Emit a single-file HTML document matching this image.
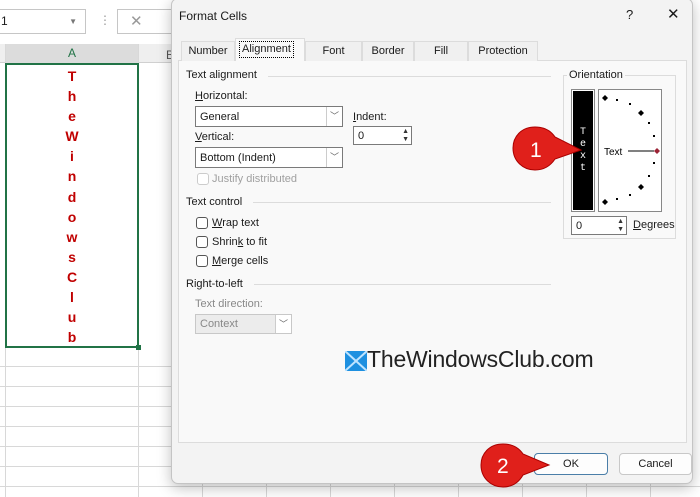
<!DOCTYPE html>
<html><head><style>
*{margin:0;padding:0;box-sizing:border-box}
body{width:700px;height:497px;overflow:hidden;background:#fff;font-family:"Liberation Sans",sans-serif;font-size:11px;color:#1a1a1a;position:relative}
.a{position:absolute}
.hl{position:absolute;height:1px;background:#d8d8d8}
.vl{position:absolute;width:1px;background:#d8d8d8}
.sel{border:1px solid #7a7a7a;background:#fff}
.line{position:absolute;height:1px;background:#dcdcdc}
.cb{position:absolute;width:12px;height:12px;border:1px solid #555;border-radius:3px;background:#fff}
u{text-decoration:underline}
.btn{position:absolute;border:1px solid #c8c8c8;border-radius:4px;background:#fdfdfd;text-align:center;font-size:11px;line-height:20px}
</style></head><body>
<div class="a" style="left:0;top:0;width:700px;height:44px;background:#fff"></div>
<div class="a" style="left:-4px;top:9px;width:90px;height:25px;border:1px solid #c6c6c6;font-size:12px;line-height:23px;padding-left:4px">1<span style="position:absolute;right:8px;top:0;color:#777;font-size:8px">▼</span></div>
<div class="a" style="left:99px;top:13px;color:#999;font-size:12px">⋮</div>
<div class="a" style="left:117px;top:9px;width:60px;height:25px;border:1px solid #c6c6c6;color:#999;font-size:15px;line-height:23px;padding-left:12px">✕</div>
<div class="a" style="left:0;top:44px;width:171px;height:19px;background:#efefef;border-bottom:1px solid #d0d0d0"></div>
<div class="a" style="left:6px;top:44px;width:132px;height:19px;background:#dcdcdc;text-align:center;color:#217346;font-size:12px;line-height:19px">A</div>
<div class="a" style="left:166px;top:48px;color:#555;font-size:12px">B</div>
<div class="vl" style="left:5px;top:44px;height:453px"></div>
<div class="vl" style="left:138px;top:44px;height:453px"></div>
<div class="hl" style="left:0;top:366px;width:171px"></div>
<div class="hl" style="left:0;top:386px;width:171px"></div>
<div class="hl" style="left:0;top:406px;width:171px"></div>
<div class="hl" style="left:0;top:426px;width:171px"></div>
<div class="hl" style="left:0;top:446px;width:171px"></div>
<div class="hl" style="left:0;top:466px;width:171px"></div>
<div class="hl" style="left:0;top:486px;width:700px"></div>
<div class="vl" style="left:202px;top:483px;height:14px"></div>
<div class="vl" style="left:266px;top:483px;height:14px"></div>
<div class="vl" style="left:330px;top:483px;height:14px"></div>
<div class="vl" style="left:394px;top:483px;height:14px"></div>
<div class="vl" style="left:458px;top:483px;height:14px"></div>
<div class="vl" style="left:522px;top:483px;height:14px"></div>
<div class="vl" style="left:586px;top:483px;height:14px"></div>
<div class="vl" style="left:650px;top:483px;height:14px"></div>
<div class="a" style="left:5px;top:63px;width:134px;height:285px;border:2px solid #217346;background:#fff"></div>
<div class="a" style="left:136px;top:345px;width:5px;height:5px;background:#217346"></div>
<div class="a" style="left:6px;top:66px;width:132px;text-align:center;color:#c00000;font-weight:bold;font-size:14px;line-height:20.1px">T<br>h<br>e<br>W<br>i<br>n<br>d<br>o<br>w<br>s<br>C<br>l<br>u<br>b</div>
<div class="a" style="left:171px;top:-2px;width:522px;height:486px;background:#f3f3f3;border:1px solid #c4c4c4;border-radius:7px;box-shadow:0 4px 14px rgba(0,0,0,.25)"></div>
<div class="a" style="left:179px;top:9px;font-size:12px">Format Cells</div>
<div class="a" style="left:626px;top:7px;font-size:13px">?</div>
<div class="a" style="left:667px;top:5px;font-size:15px">✕</div>
<div class="a" style="left:178px;top:60px;width:509px;height:383px;background:#f9f9f9;border:1px solid #dcdcdc"></div>
<div class="a" style="left:181px;top:41px;width:54px;height:20px;border:1px solid #dcdcdc;border-bottom:none;background:#f0f0f0;text-align:center;line-height:19px">Number</div>
<div class="a" style="left:235px;top:38px;width:70px;height:23px;border:1px solid #dcdcdc;border-bottom:none;background:#f9f9f9"></div>
<div class="a" style="left:239px;top:41px;height:17px;border:1px dotted #000;padding:0 2px;line-height:15px">Alignment</div>
<div class="a" style="left:305px;top:41px;width:57px;height:20px;border:1px solid #dcdcdc;border-bottom:none;background:#f0f0f0;text-align:center;line-height:19px">Font</div>
<div class="a" style="left:362px;top:41px;width:52px;height:20px;border:1px solid #dcdcdc;border-bottom:none;background:#f0f0f0;text-align:center;line-height:19px">Border</div>
<div class="a" style="left:414px;top:41px;width:54px;height:20px;border:1px solid #dcdcdc;border-bottom:none;background:#f0f0f0;text-align:center;line-height:19px">Fill</div>
<div class="a" style="left:468px;top:41px;width:70px;height:20px;border:1px solid #dcdcdc;border-bottom:none;background:#f0f0f0;text-align:center;line-height:19px">Protection</div>
<div class="a" style="left:186px;top:69px">Text alignment</div>
<div class="line" style="left:268px;top:76px;width:283px"></div>
<div class="a" style="left:195px;top:90px"><u>H</u>orizontal:</div>
<div class="a sel" style="left:195px;top:106px;width:148px;height:21px;padding:4px 0 0 4px">General<span style="position:absolute;right:0;top:0;width:16px;height:19px;border-left:1px solid #ccc;text-align:center;color:#666;font-size:9px;line-height:19px">﹀</span></div>
<div class="a" style="left:195px;top:131px"><u>V</u>ertical:</div>
<div class="a sel" style="left:195px;top:147px;width:148px;height:21px;padding:4px 0 0 4px">Bottom (Indent)<span style="position:absolute;right:0;top:0;width:16px;height:19px;border-left:1px solid #ccc;text-align:center;color:#666;font-size:9px;line-height:19px">﹀</span></div>
<div class="a" style="left:353px;top:111px"><u>I</u>ndent:</div>
<div class="a sel" style="left:353px;top:126px;width:59px;height:19px;padding:3px 0 0 4px">0<span style="position:absolute;right:2px;top:1px;font-size:7px;color:#333;line-height:8px">▲<br>▼</span></div>
<div class="cb" style="left:197px;top:173px;border-color:#ccc"></div>
<div class="a" style="left:212px;top:173px;color:#a0a0a0">Justify distributed</div>
<div class="a" style="left:186px;top:196px">Text control</div>
<div class="line" style="left:253px;top:202px;width:298px"></div>
<div class="cb" style="left:196px;top:217px"></div><div class="a" style="left:212px;top:217px"><u>W</u>rap text</div>
<div class="cb" style="left:196px;top:236px"></div><div class="a" style="left:212px;top:236px">Shrin<u>k</u> to fit</div>
<div class="cb" style="left:196px;top:255px"></div><div class="a" style="left:212px;top:255px"><u>M</u>erge cells</div>
<div class="a" style="left:186px;top:278px">Right-to-left</div>
<div class="line" style="left:254px;top:284px;width:297px"></div>
<div class="a" style="left:195px;top:298px;color:#888">Text direction:</div>
<div class="a" style="left:195px;top:314px;width:97px;height:20px;border:1px solid #c8c8c8;background:#ececec;color:#888;padding:3px 0 0 4px">Context<span style="position:absolute;right:0;top:0;width:16px;height:18px;border-left:1px solid #ccc;background:#fff;text-align:center;color:#666;font-size:9px;line-height:18px">﹀</span></div>
<div class="a" style="left:563px;top:75px;width:113px;height:164px;border:1px solid #dcdcdc"></div>
<div class="a" style="left:567px;top:69px;background:#f9f9f9;padding:0 2px">Orientation</div>
<div class="a" style="left:571px;top:89px;width:24px;height:123px;background:#000;border:1px solid #888;box-shadow:0 0 0 1px #fff inset"></div>
<div class="a" style="left:571px;top:127px;width:24px;text-align:center;color:#fff;font-size:10px;line-height:12px;font-family:'Liberation Mono',monospace">T<br>e<br>x<br>t</div>
<div class="a" style="left:598px;top:89px;width:64px;height:123px;background:#fff;border:1px solid #888"></div>
<svg class="a" style="left:598px;top:89px" width="64" height="123">
<g fill="#000">
<path d="M7 6l3 3-3 3-3-3z"/><path d="M43 21l3 3-3 3-3-3z"/><path d="M43 95l3 3-3 3-3-3z"/><path d="M7 110l3 3-3 3-3-3z"/>
<rect x="18" y="10" width="2" height="2"/><rect x="31" y="14" width="2" height="2"/><rect x="50" y="33" width="2" height="2"/><rect x="55" y="46" width="2" height="2"/><rect x="55" y="73" width="2" height="2"/><rect x="50" y="86" width="2" height="2"/><rect x="31" y="105" width="2" height="2"/><rect x="18" y="109" width="2" height="2"/></g>
<line x1="30" y1="62" x2="56" y2="62" stroke="#000"/><path d="M59 59l3 3-3 3-3-3z" fill="#9b2335"/>
<text x="6" y="66" font-size="10" font-family="Liberation Sans">Text</text></svg>
<div class="a sel" style="left:571px;top:216px;width:56px;height:19px;padding:3px 0 0 4px">0<span style="position:absolute;right:2px;top:1px;font-size:7px;color:#333;line-height:8px">▲<br>▼</span></div>
<div class="a" style="left:633px;top:219px"><u>D</u>egrees</div>
<svg class="a" style="left:345px;top:351px" width="22" height="20"><rect width="22" height="20" fill="#1e90e0"/><path d="M0 0L22 20M22 0L0 20" stroke="#bfe4ff" stroke-width="2"/></svg>
<div class="a" style="left:367px;top:346px;font-size:23px;color:#222;letter-spacing:-0.2px">TheWindowsClub.com</div>
<div class="btn" style="left:534px;top:453px;width:74px;border-color:#4a7ea8">OK</div>
<div class="btn" style="left:619px;top:453px;width:73px">Cancel</div>
<svg class="a" style="left:511px;top:125px" width="75" height="48"><path d="M24 2 C10 2 2 12 2 23 C2 36 12 45 24 45 C34 45 40 40 44 34 L70 25 L44 12 C40 6 34 2 24 2Z" fill="#e0201b" stroke="#a00" stroke-width="1"/><text x="19" y="32" fill="#fff" font-size="21" font-family="Liberation Sans">1</text></svg>
<svg class="a" style="left:479px;top:443px" width="75" height="46"><path d="M24 1 C10 1 2 11 2 22 C2 35 12 44 24 44 C34 44 40 39 44 32 L70 22 L44 11 C40 5 34 1 24 1Z" fill="#e0201b" stroke="#a00" stroke-width="1"/><text x="18" y="30" fill="#fff" font-size="21" font-family="Liberation Sans">2</text></svg>
</body></html>
